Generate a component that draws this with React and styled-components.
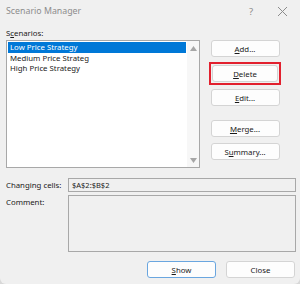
import React from "react";
import styled, { createGlobalStyle } from "styled-components";

const GlobalStyle = createGlobalStyle`
  html, body {
    margin: 0;
    padding: 0;
    background: #d8d8d8;
  }
  body {
    font-family: "Noto Sans", "Open Sans", sans-serif;
  }
`;

const scenarios = ["Low Price Strategy", "Medium Price Strateg", "High Price Strategy"];

const App = () => {
    return (
        <>
            <GlobalStyle />
            <Dialog>
                <TitleBar>
                    <Title>Scenario Manager</Title>
                    <TitleButtons>
                        <HelpGlyph>?</HelpGlyph>
                        <svg width="11" height="11" viewBox="0 0 11 11">
                            <path d="M1 1 L10 10 M10 1 L1 10" stroke="#8c8c8c" strokeWidth="1" fill="none" />
                        </svg>
                    </TitleButtons>
                </TitleBar>
                <Body>
                    <Label>S<u>c</u>enarios:</Label>
                    <MainRow>
                        <ListBox>
                            <Items>
                                {scenarios.map((s, i) => (
                                    <Item key={s} selected={i === 0}>{s}</Item>
                                ))}
                            </Items>
                            <ScrollBar>
                                <svg width="7" height="5" viewBox="0 0 7 5">
                                    <path d="M0 5 L3.5 0 L7 5 Z" fill="#a6a6a6" />
                                </svg>
                                <svg width="7" height="5" viewBox="0 0 7 5">
                                    <path d="M0 0 L3.5 5 L7 0 Z" fill="#a6a6a6" />
                                </svg>
                            </ScrollBar>
                        </ListBox>
                        <ButtonColumn>
                            <SideButton><u>A</u>dd...</SideButton>
                            <Highlight>
                                <SideButton><u>D</u>elete</SideButton>
                            </Highlight>
                            <SideButton><u>E</u>dit...</SideButton>
                            <Spacer />
                            <SideButton><u>M</u>erge...</SideButton>
                            <SideButton>S<u>u</u>mmary...</SideButton>
                        </ButtonColumn>
                    </MainRow>
                    <FieldGrid>
                        <FieldLabel>Changing cells:</FieldLabel>
                        <Field>$A$2:$B$2</Field>
                        <FieldLabel>Comment:</FieldLabel>
                        <Field tall />
                    </FieldGrid>
                    <Footer>
                        <DialogButton primary><u>S</u>how</DialogButton>
                        <DialogButton>Close</DialogButton>
                    </Footer>
                </Body>
            </Dialog>
        </>
    );
};

const Dialog = styled.div`
  width: 300px;
  height: 284px;
  background: #f0f0f0;
  border-radius: 0 0 6px 6px;
  box-sizing: border-box;
  display: flex;
  flex-direction: column;
  overflow: hidden;
`;

const TitleBar = styled.div`
  height: 22px;
  display: flex;
  align-items: center;
  justify-content: space-between;
  padding: 0 12px 0 6px;
`;

const Title = styled.span`
  font-size: 8.8px;
  color: #8c8c8c;
`;

const TitleButtons = styled.div`
  display: flex;
  align-items: center;
  gap: 24px;
`;

const HelpGlyph = styled.span`
  font-size: 9.5px;
  color: #8c8c8c;
`;

const Body = styled.div`
  flex: 1;
  display: flex;
  flex-direction: column;
  padding: 5px 4px 6px 6px;
`;

const Label = styled.div`
  font-size: 7.8px;
  color: #1a1a1a;
  height: 13px;
  line-height: 12px;

  u {
    text-underline-offset: 1px;
  }
`;

const MainRow = styled.div`
  display: flex;
  align-items: flex-start;
  gap: 8px;
`;

const ListBox = styled.div`
  width: 194px;
  height: 128px;
  box-sizing: border-box;
  border: 1px solid #a8a8a8;
  background: #ffffff;
  display: flex;
`;

const Items = styled.div`
  flex: 1;
  padding: 1px 0 0 1px;
`;

const Item = styled.div`
  height: 10.5px;
  line-height: 10px;
  font-size: 7.8px;
  padding-left: 2px;
  margin-right: 1px;
  color: ${(p) => (p.selected ? "#ffffff" : "#1a1a1a")};
  background: ${(p) => (p.selected ? "#0078d7" : "transparent")};
  white-space: nowrap;
`;

const ScrollBar = styled.div`
  width: 12px;
  background: #f7f7f7;
  display: flex;
  flex-direction: column;
  align-items: center;
  justify-content: space-between;
  padding: 5px 0 4px;
`;

const ButtonColumn = styled.div`
  width: 74px;
  display: flex;
  flex-direction: column;
  align-items: center;
  gap: 6px;
`;

const SideButton = styled.button`
  width: 69px;
  height: 17px;
  box-sizing: border-box;
  background: #fdfdfd;
  border: 1px solid #d4d4d4;
  border-radius: 3px;
  font-family: "Noto Sans", "Open Sans", sans-serif;
  font-size: 7.8px;
  color: #1a1a1a;
  padding: 0;
  line-height: 14px;
`;

const Highlight = styled.div`
  border: 2px solid #e2202e;
  padding: 1px 1px;
  width: 72px;
  box-sizing: border-box;
  display: flex;
  justify-content: center;
  margin: -1px 0 -2px;

  ${SideButton} {
    width: 66px;
  }
`;

const Spacer = styled.div`
  height: 2px;
`;

const FieldGrid = styled.div`
  display: grid;
  grid-template-columns: 62px 228px;
  row-gap: 3px;
  margin-top: 10px;
`;

const FieldLabel = styled.div`
  font-size: 7.8px;
  color: #1a1a1a;
  line-height: 12px;
  padding-top: 1px;
`;

const Field = styled.div`
  height: ${(p) => (p.tall ? "57px" : "14px")};
  box-sizing: border-box;
  border: 1px solid #a8a8a8;
  background: #f0f0f0;
  font-size: 7.5px;
  color: #1a1a1a;
  padding-left: 3px;
  line-height: 12px;
`;

const Footer = styled.div`
  display: flex;
  justify-content: flex-end;
  gap: 10px;
  margin-top: 9px;
  padding-right: 1px;
`;

const DialogButton = styled.button`
  width: 69px;
  height: 17px;
  box-sizing: border-box;
  background: #fdfdfd;
  border: 1px solid ${(p) => (p.primary ? "#6aa6df" : "#d4d4d4")};
  border-radius: 3px;
  font-family: "Noto Sans", "Open Sans", sans-serif;
  font-size: 7.8px;
  color: #1a1a1a;
  padding: 0;
`;

export default App;
